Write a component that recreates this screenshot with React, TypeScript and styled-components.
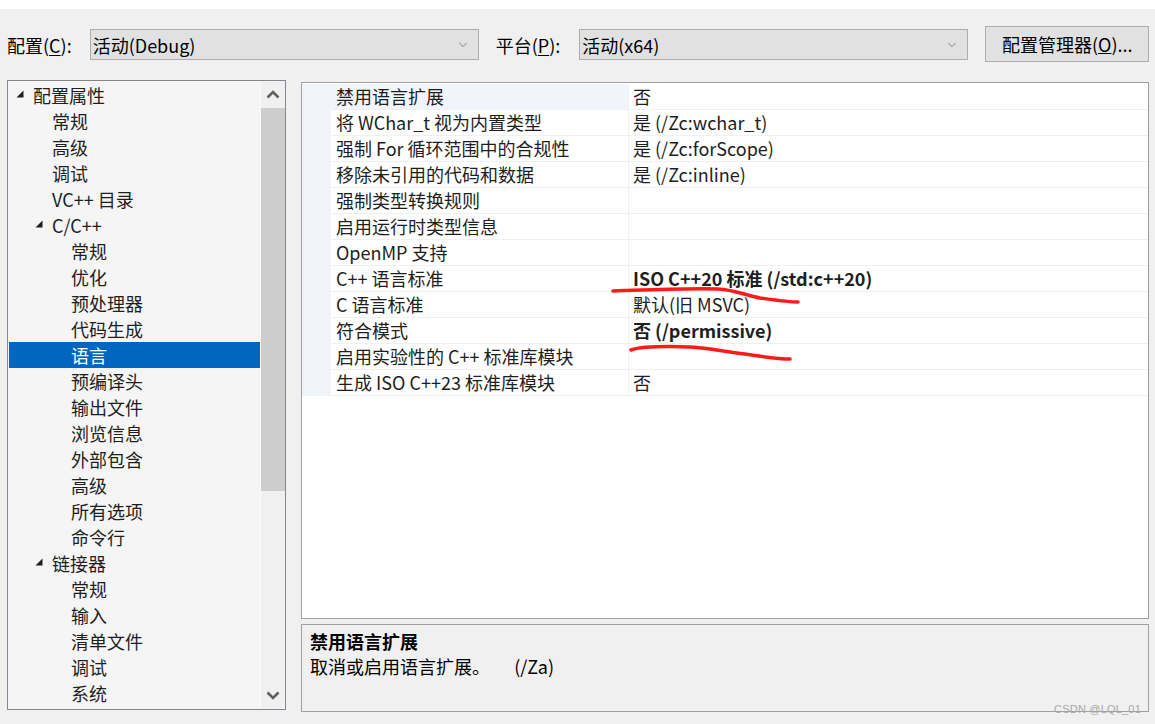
import React from "react";
import styled, { createGlobalStyle } from "styled-components";

const GlobalStyle = createGlobalStyle`
  html, body {
    margin: 0;
    padding: 0;
    background: #f0f0f0;
  }
  body {
    font-family: "Noto Sans CJK SC", "Noto Sans", sans-serif;
    color: #000;
  }
`;

type TreeItem = {
  label: string;
  level: number;
  expanded?: boolean;
  selected?: boolean;
};

const treeItems: TreeItem[] = [
  { label: "配置属性", level: 0, expanded: true },
  { label: "常规", level: 1 },
  { label: "高级", level: 1 },
  { label: "调试", level: 1 },
  { label: "VC++ 目录", level: 1 },
  { label: "C/C++", level: 1, expanded: true },
  { label: "常规", level: 2 },
  { label: "优化", level: 2 },
  { label: "预处理器", level: 2 },
  { label: "代码生成", level: 2 },
  { label: "语言", level: 2, selected: true },
  { label: "预编译头", level: 2 },
  { label: "输出文件", level: 2 },
  { label: "浏览信息", level: 2 },
  { label: "外部包含", level: 2 },
  { label: "高级", level: 2 },
  { label: "所有选项", level: 2 },
  { label: "命令行", level: 2 },
  { label: "链接器", level: 1, expanded: true },
  { label: "常规", level: 2 },
  { label: "输入", level: 2 },
  { label: "清单文件", level: 2 },
  { label: "调试", level: 2 },
  { label: "系统", level: 2 },
];

type Prop = { name: string; value: string; bold?: boolean };

const properties: Prop[] = [
  { name: "禁用语言扩展", value: "否" },
  { name: "将 WChar_t 视为内置类型", value: "是 (/Zc:wchar_t)" },
  { name: "强制 For 循环范围中的合规性", value: "是 (/Zc:forScope)" },
  { name: "移除未引用的代码和数据", value: "是 (/Zc:inline)" },
  { name: "强制类型转换规则", value: "" },
  { name: "启用运行时类型信息", value: "" },
  { name: "OpenMP 支持", value: "" },
  { name: "C++ 语言标准", value: "ISO C++20 标准 (/std:c++20)", bold: true },
  { name: "C 语言标准", value: "默认(旧 MSVC)" },
  { name: "符合模式", value: "否 (/permissive)", bold: true },
  { name: "启用实验性的 C++ 标准库模块", value: "" },
  { name: "生成 ISO C++23 标准库模块", value: "否" },
];

const Chevron = ({ up, thin }: { up?: boolean; thin?: boolean }) => (
  <svg width={thin ? 10 : 14} height={thin ? 6 : 9} viewBox="0 0 14 9">
    <path
      d={up ? "M1.5 7.5 L7 2 L12.5 7.5" : "M1.5 1.5 L7 7 L12.5 1.5"}
      fill="none"
      stroke={thin ? "#707070" : "#606060"}
      strokeWidth={thin ? 1.3 : 2.6}
    />
  </svg>
);

const Expander = () => (
  <svg width="8" height="8" viewBox="0 0 8 8">
    <polygon points="7.5,0.5 7.5,7.5 0.5,7.5" fill="#1e1e1e" />
  </svg>
);

export default function App() {
  return (
    <Page>
      <GlobalStyle />
      <TopStrip />
      <Toolbar>
        <FieldLabel>
          配置(<u>C</u>):
        </FieldLabel>
        <Combo $width={389} $gap={18}>
          <span>活动(Debug)</span>
          <Chevron thin />
        </Combo>
        <FieldLabel>
          平台(<u>P</u>):
        </FieldLabel>
        <Combo $width={389} $gap={19}>
          <span>活动(x64)</span>
          <Chevron thin />
        </Combo>
        <ManagerButton>
          配置管理器(<u>O</u>)...
        </ManagerButton>
      </Toolbar>
      <Main>
        <TreePanel>
          <TreeList>
            {treeItems.map((item, i) => (
              <TreeRow key={i} $level={item.level} $selected={!!item.selected}>
                <ExpanderSlot>{item.expanded && <Expander />}</ExpanderSlot>
                {item.label}
              </TreeRow>
            ))}
          </TreeList>
          <ScrollBar>
            <ScrollArrow>
              <Chevron up />
            </ScrollArrow>
            <ScrollTrack>
              <ScrollThumb />
            </ScrollTrack>
            <ScrollArrow>
              <Chevron />
            </ScrollArrow>
          </ScrollBar>
        </TreePanel>
        <RightColumn>
          <GridPanel>
            <Grid>
              {properties.map((p, i) => (
                <GridRow key={i}>
                  <Gutter />
                  <NameCell $active={i === 0}>{p.name}</NameCell>
                  <ValueCell $bold={!!p.bold}>{p.value}</ValueCell>
                </GridRow>
              ))}
            </Grid>
          </GridPanel>
          <DescPanel>
            <DescTitle>禁用语言扩展</DescTitle>
            <DescText>{"取消或启用语言扩展。      (/Za)"}</DescText>
          </DescPanel>
        </RightColumn>
      </Main>
      <Annotations width="1155" height="724" viewBox="0 0 1155 724">
        <path
          d="M613 291 C 650 290, 690 288, 718 289 C 735 290, 745 295, 760 298 C 775 300, 788 302, 798 302"
          fill="none"
          stroke="#ff1a1a"
          strokeWidth="3.5"
          strokeLinecap="round"
        />
        <path
          d="M631 350 C 640 347, 660 346, 690 347 C 710 348, 725 352, 745 354 C 765 357, 780 359, 790 359"
          fill="none"
          stroke="#ff1a1a"
          strokeWidth="3.5"
          strokeLinecap="round"
        />
      </Annotations>
      <Watermark>CSDN @LQL_01</Watermark>
    </Page>
  );
}

const Page = styled.div`
  position: relative;
  width: 1155px;
  height: 724px;
  display: flex;
  flex-direction: column;
  overflow: hidden;
  background: #f0f0f0;
`;

const TopStrip = styled.div`
  height: 9px;
  background: #ffffff;
`;

const Toolbar = styled.div`
  height: 71px;
  display: flex;
  align-items: center;
  padding: 0 0 0 7px;
  box-sizing: border-box;
  font-size: 18px;
  line-height: 24px;
`;

const FieldLabel = styled.div`
  white-space: nowrap;
  u {
    text-underline-offset: 2px;
  }
`;

const Combo = styled.div<{ $width: number; $gap: number }>`
  width: ${(p) => p.$width}px;
  height: 31px;
  margin: 0 17px 0 ${(p) => p.$gap}px;
  box-sizing: border-box;
  background: #e1e1e1;
  border: 1px solid #adadad;
  display: flex;
  align-items: center;
  justify-content: space-between;
  padding: 0 10px 0 2px;
  svg {
    margin-top: 1px;
  }
`;

const ManagerButton = styled.div`
  width: 164px;
  height: 36px;
  box-sizing: border-box;
  background: #e1e1e1;
  border: 1px solid #adadad;
  display: flex;
  align-items: center;
  justify-content: center;
  margin-top: -1px;
  white-space: nowrap;
`;

const Main = styled.div`
  flex: 1;
  display: flex;
  padding: 0 6px 12px 7px;
  gap: 15px;
`;

const TreePanel = styled.div`
  width: 279px;
  height: 630px;
  box-sizing: border-box;
  border: 1px solid #828790;
  background: #f5f5f5;
  display: flex;
`;

const TreeList = styled.div`
  flex: 1;
  padding: 1px 0 0 1px;
  border-right: 1px solid #fafafa;
`;

const TreeRow = styled.div<{ $level: number; $selected: boolean }>`
  height: 26px;
  display: flex;
  align-items: center;
  font-size: 18px;
  line-height: 26px;
  white-space: nowrap;
  padding-left: ${(p) => 7 + p.$level * 19}px;
  background: ${(p) => (p.$selected ? "#0067c0" : "transparent")};
  color: ${(p) => (p.$selected ? "#ffffff" : "#1e1e1e")};
`;

const ExpanderSlot = styled.span`
  width: 17px;
  height: 26px;
  display: inline-flex;
  align-items: center;
  padding-bottom: 2px;
  box-sizing: border-box;
`;

const ScrollBar = styled.div`
  width: 24px;
  display: flex;
  flex-direction: column;
  background: #f0f0f0;
`;

const ScrollArrow = styled.div`
  height: 27px;
  display: flex;
  align-items: center;
  justify-content: center;
`;

const ScrollTrack = styled.div`
  flex: 1;
`;

const ScrollThumb = styled.div`
  height: 383px;
  background: #cdcdcd;
`;

const RightColumn = styled.div`
  flex: 1;
  display: flex;
  flex-direction: column;
  gap: 5px;
  padding-top: 2px;
`;

const GridPanel = styled.div`
  height: 537px;
  box-sizing: border-box;
  border: 1px solid #a0a0a0;
  background: #ffffff;
  padding-top: 1px;
`;

const Grid = styled.div`
  display: flex;
  flex-direction: column;
`;

const GridRow = styled.div`
  height: 26px;
  display: flex;
  font-size: 18px;
  line-height: 25px;
`;

const Gutter = styled.div`
  width: 29px;
  background: #f0f4fa;
`;

const NameCell = styled.div<{ $active: boolean }>`
  width: 298px;
  padding-left: 5px;
  box-sizing: border-box;
  white-space: nowrap;
  color: #1e1e1e;
  border-bottom: 1px solid #f0f0f0;
  border-right: 1px solid #f0f0f0;
  background: ${(p) => (p.$active ? "#f1f5fb" : "#ffffff")};
`;

const ValueCell = styled.div<{ $bold: boolean }>`
  flex: 1;
  padding-left: 4px;
  white-space: nowrap;
  color: #1e1e1e;
  border-bottom: 1px solid #f0f0f0;
  font-weight: ${(p) => (p.$bold ? 700 : 400)};
`;

const DescPanel = styled.div`
  height: 88px;
  box-sizing: border-box;
  border: 1px solid #a0a0a0;
  background: #f0f0f0;
  padding: 4px 8px;
  font-size: 18px;
  line-height: 25px;
`;

const DescTitle = styled.div`
  font-weight: 700;
`;

const DescText = styled.div`
  white-space: pre;
`;

const Annotations = styled.svg`
  position: absolute;
  left: 0;
  top: 0;
  pointer-events: none;
`;

const Watermark = styled.div`
  position: absolute;
  right: 14px;
  bottom: 9px;
  font-family: "Liberation Sans", sans-serif;
  font-size: 11px;
  color: #a8a8a8;
  letter-spacing: 0.2px;
`;
